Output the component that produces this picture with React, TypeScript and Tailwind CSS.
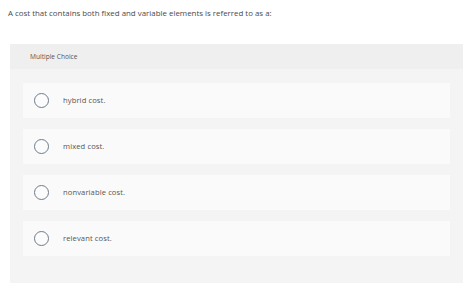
const options = ["hybrid cost.", "mixed cost.", "nonvariable cost.", "relevant cost."];

export default function App() {
  return (
    <div className="h-[304px] w-[474px] bg-white font-['Open_Sans',sans-serif] text-[#333]">
      <p className="px-[8px] pt-[7px] text-[7.9px] leading-[12px] text-[#4a4a4a]">
        A cost that contains both fixed and variable elements is referred to as a:
      </p>
      <div className="ml-[10px] mt-[25px] w-[453px] bg-[#f4f4f4]">
        <div className="flex h-[25px] items-center bg-[#efefef] pl-[20px] text-[6.6px] text-[#555]">
          Multiple Choice
        </div>
        <div className="flex flex-col gap-[11px] px-[13px] pb-[27px] pt-[14px]">
          {options.map((o) => (
            <div key={o} className="flex h-[35px] items-center bg-[#fafafa] pl-[11px]">
              <span className="h-[15px] w-[15px] rounded-full border border-[#6e7c8c] bg-[#fcfcfc]" />
              <span className="ml-[14px] text-[7.6px] tracking-[0.1px] text-[#555]">{o}</span>
            </div>
          ))}
        </div>
      </div>
    </div>
  );
}
